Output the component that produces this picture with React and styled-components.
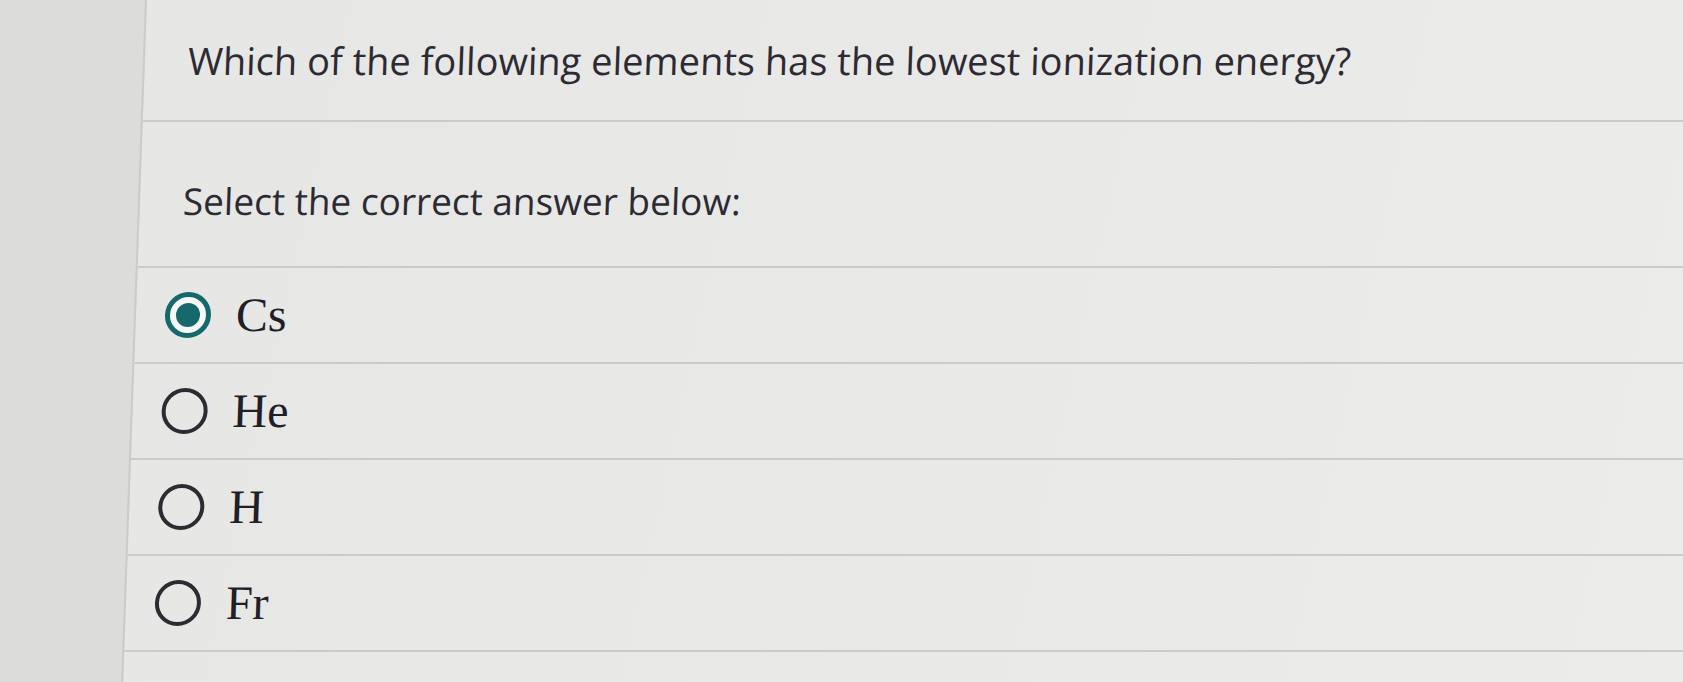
import styled, { createGlobalStyle } from "styled-components";

const GlobalStyle = createGlobalStyle`
  html, body {
    margin: 0;
    padding: 0;
    height: 100%;
    overflow: hidden;
    background: #e8e8e6;
  }
  #root {
    height: 100%;
  }
`;

const options = [
  { id: "cs", label: "Cs", selected: true },
  { id: "he", label: "He" },
  { id: "h", label: "H" },
  { id: "fr", label: "Fr" },
];

function App() {
  return (
    <>
      <GlobalStyle />
      <Screen>
        <Sidebar />
        <Main>
          <QuestionBar>
            Which of the following elements has the lowest ionization energy?
          </QuestionBar>
          <Prompt>Select the correct answer below:</Prompt>
          <OptionList>
            {options.map((opt) => (
              <OptionRow key={opt.id}>
                <Radio selected={opt.selected} />
                <Label>{opt.label}</Label>
              </OptionRow>
            ))}
          </OptionList>
        </Main>
      </Screen>
    </>
  );
}

export default App;

// the photo is taken at a slight angle, so the whole screen leans a little
const Screen = styled.div`
  display: flex;
  width: calc(100% + 40px);
  height: 100%;
  transform: skewX(-2deg);
  transform-origin: 0 0;
  background: linear-gradient(100deg, #e6e6e4 0%, #e9e9e7 60%, #ececea 100%);
`;

const Sidebar = styled.div`
  flex: 0 0 145px;
  background: #dcdcda;
  border-right: 2px solid #cbcbc9;
`;

const Main = styled.div`
  flex: 1;
  display: flex;
  flex-direction: column;
  color: #2c2a33;
  font-family: "Open Sans", "Liberation Sans", sans-serif;
`;

const QuestionBar = styled.div`
  height: 122px;
  box-sizing: border-box;
  padding: 41px 0 0 43px;
  font-size: 38px;
  line-height: 38px;
  border-bottom: 2px solid #cbcbc9;
  white-space: nowrap;
`;

const Prompt = styled.div`
  height: 146px;
  box-sizing: border-box;
  padding: 60px 0 0 43px;
  font-size: 37px;
  line-height: 38px;
  border-bottom: 2px solid #cbcbc9;
  white-space: nowrap;
`;

const OptionList = styled.div`
  display: flex;
  flex-direction: column;
`;

const OptionRow = styled.div`
  display: flex;
  align-items: center;
  gap: 25px;
  height: 96px;
  box-sizing: border-box;
  padding-left: 29px;
  border-bottom: 2px solid #cbcbc9;
`;

const Radio = styled.span`
  position: relative;
  flex: 0 0 46px;
  height: 46px;
  box-sizing: border-box;
  border-radius: 50%;
  border: ${(p) => (p.selected ? "5px solid #15696b" : "4px solid #2d2a32")};
  background: ${(p) => (p.selected ? "#f7f7f5" : "transparent")};

  &::after {
    content: "";
    display: ${(p) => (p.selected ? "block" : "none")};
    position: absolute;
    left: 50%;
    top: 50%;
    width: 24px;
    height: 24px;
    margin: -12px 0 0 -12px;
    border-radius: 50%;
    background: #15696b;
  }
`;

const Label = styled.span`
  font-family: "Liberation Serif", "Times New Roman", serif;
  font-size: 48px;
  line-height: 48px;
  color: #201e27;
`;
